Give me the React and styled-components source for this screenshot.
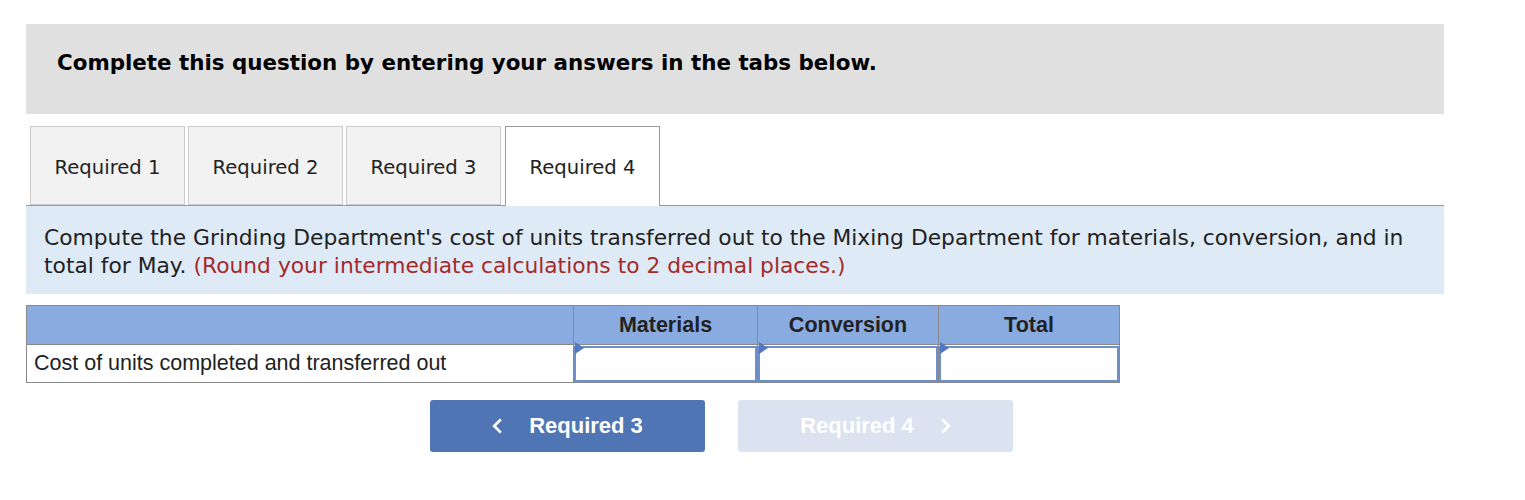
import React from 'react';
import styled, { createGlobalStyle } from 'styled-components';

const GlobalStyle = createGlobalStyle`
  body {
    margin: 0;
    background: #fff;
    font-family: "DejaVu Sans", Verdana, sans-serif;
  }
`;

const tabs = ['Required 1', 'Required 2', 'Required 3', 'Required 4'];
const columns = ['Materials', 'Conversion', 'Total'];

const App = () => {
  const activeTab = 3;

  return (
    <Page>
      <GlobalStyle />
      <Banner>Complete this question by entering your answers in the tabs below.</Banner>

      <TabBar>
        {tabs.map((t, i) => (
          <Tab key={t} active={i === activeTab}>{t}</Tab>
        ))}
      </TabBar>

      <Instructions>
        Compute the Grinding Department's cost of units transferred out to the Mixing Department for materials, conversion, and in
        total for May. <Hint>(Round your intermediate calculations to 2 decimal places.)</Hint>
      </Instructions>

      <Table>
        <thead>
          <tr>
            <HeadCell />
            {columns.map(c => (
              <HeadCell key={c}>{c}</HeadCell>
            ))}
          </tr>
        </thead>
        <tbody>
          <tr>
            <LabelCell>Cost of units completed and transferred out</LabelCell>
            {columns.map(c => (
              <InputCell key={c}>
                <InputBox>
                  <Marker />
                </InputBox>
              </InputCell>
            ))}
          </tr>
        </tbody>
      </Table>

      <NavRow>
        <NavButton>
          <Chevron viewBox="0 0 10 16"><path d="M8 2 L2 8 L8 14" /></Chevron>
          Required 3
        </NavButton>
        <NavButton disabled>
          Required 4
          <Chevron viewBox="0 0 10 16"><path d="M2 2 L8 8 L2 14" /></Chevron>
        </NavButton>
      </NavRow>
    </Page>
  );
};

const Page = styled.div`
  padding: 24px 0 0 26px;
  width: 1418px;
`;

const Banner = styled.div`
  background: #e0e0e0;
  height: 90px;
  padding: 0 0 14px 31px;
  display: flex;
  align-items: center;
  font-weight: bold;
  font-size: 21.4px;
  color: #000;
  box-sizing: border-box;
`;

const TabBar = styled.div`
  display: flex;
  gap: 3px;
  margin-top: 12px;
  padding-left: 4px;
  border-bottom: 1px solid #999;
  height: 79px;
`;

const Tab = styled.div`
  width: 155px;
  box-sizing: border-box;
  height: ${p => (p.active ? '80px' : '79px')};
  display: flex;
  align-items: center;
  justify-content: center;
  padding-top: ${p => (p.active ? '2px' : '3px')};
  font-size: 19.6px;
  color: #222;
  background: ${p => (p.active ? '#fff' : '#f2f2f2')};
  border: 1px solid ${p => (p.active ? '#999' : '#ccc')};
  border-bottom: ${p => (p.active ? 'none' : '1px solid #ccc')};
  margin-left: ${p => (p.active ? '1px' : '0')};
`;

const Instructions = styled.div`
  background: #dfeaf7;
  padding: 18px 18px 14px 18px;
  font-size: 21.8px;
  line-height: 28px;
  color: #222;
  height: 88px;
  box-sizing: border-box;
`;

const Hint = styled.span`
  color: #a52a2a;
`;

const Table = styled.table`
  margin-top: 11px;
  border-collapse: collapse;
  font-family: "Liberation Sans", Arial, sans-serif;
  font-size: 21.5px;
`;

const HeadCell = styled.th`
  background: #8aabe0;
  border: 1px solid #888;
  height: 38px;
  padding: 0;
  font-weight: bold;
  color: #222;
  &:nth-child(1) { width: 546px; }
  &:nth-child(2) { width: 183px; }
  &:nth-child(3) { width: 180px; }
  &:nth-child(4) { width: 180px; }
`;

const LabelCell = styled.td`
  border: 1px solid #888;
  border-right: none;
  height: 36px;
  padding: 0 0 0 7px;
  color: #222;
`;

const InputCell = styled.td`
  border: 1px solid #888;
  padding: 1px 0 0;
  height: 36px;
  vertical-align: top;
`;

const InputBox = styled.div`
  position: relative;
  height: 36px;
  border: 2px solid #6f8fc9;
  box-sizing: border-box;
  background: #fff;
`;

const Marker = styled.span`
  position: absolute;
  left: -1px;
  top: -1px;
  width: 0;
  height: 0;
  border-top: 6px solid transparent;
  border-bottom: 6px solid transparent;
  border-left: 9px solid #4f78c0;
  margin-top: -5px;
`;

const NavRow = styled.div`
  display: flex;
  gap: 33px;
  margin-top: 17px;
  padding-left: 404px;
`;

const NavButton = styled.div`
  width: 275px;
  height: 52px;
  box-sizing: border-box;
  border-radius: 3px;
  display: flex;
  align-items: center;
  justify-content: center;
  gap: 26px;
  font-family: "Liberation Sans", Arial, sans-serif;
  font-weight: bold;
  font-size: 22px;
  color: #fff;
  background: ${p => (p.disabled ? '#dce3f0' : '#5075b5')};
`;

const Chevron = styled.svg`
  width: 11px;
  height: 18px;
  fill: none;
  stroke: #fff;
  stroke-width: 2.5;
`;

export default App;
